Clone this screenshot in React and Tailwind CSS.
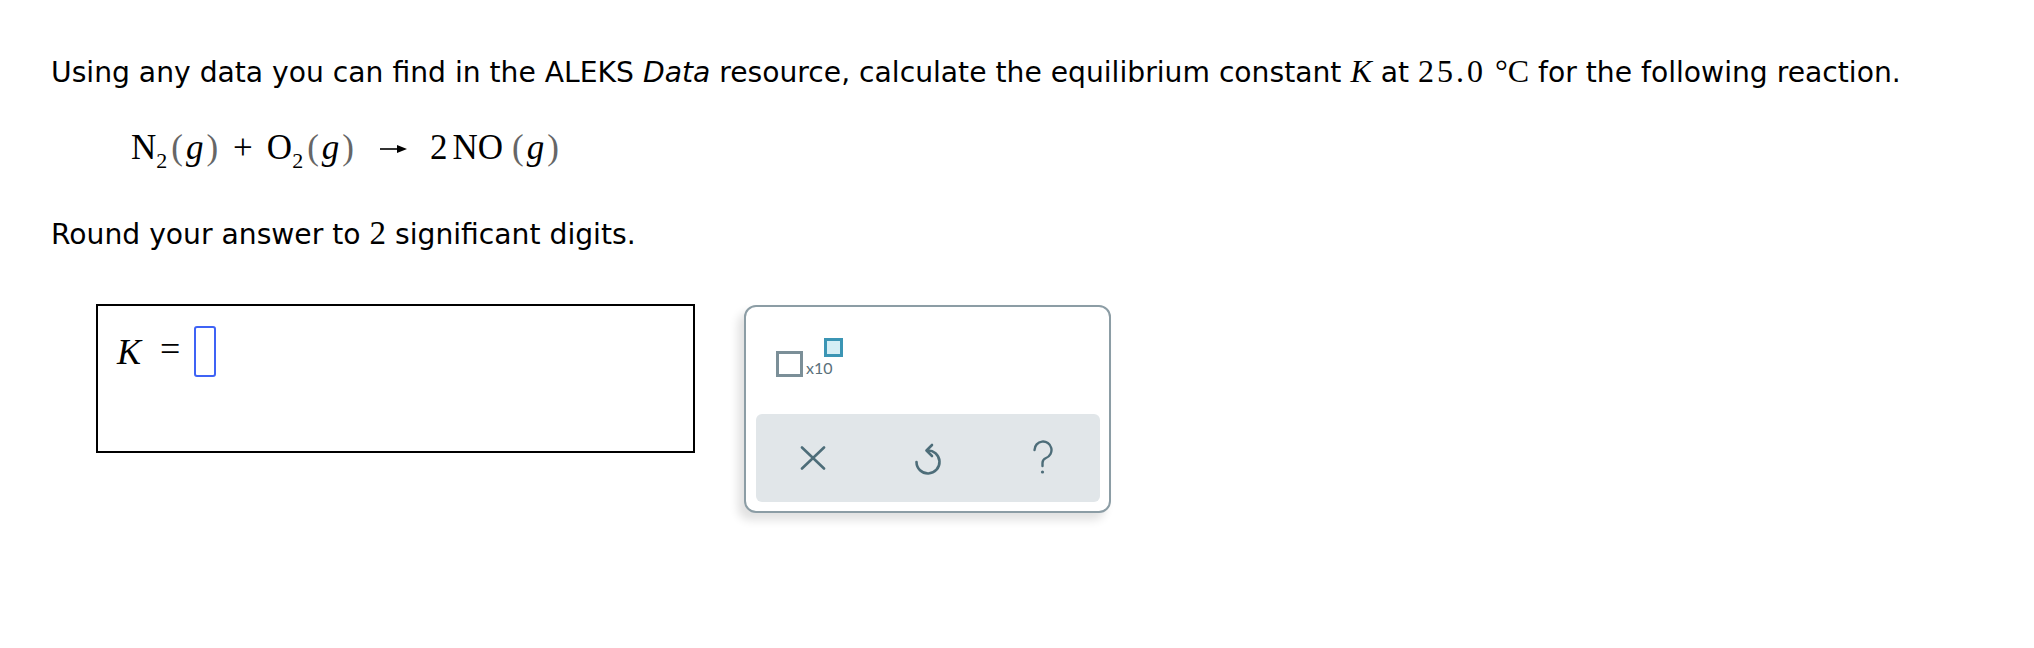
import React from 'react';

const serif = "font-['Liberation_Serif','Times_New_Roman',serif]";

// Arrow used in the reaction
const ReactionArrow = () => (
  <svg width="27" height="10" viewBox="0 0 27 10" className="ml-[26px] inline-block align-[5px]">
    <line x1="0" y1="5" x2="19" y2="5" stroke="#000" strokeWidth="1.6" />
    <path d="M17 1 L27 5 L17 9 Z" fill="#000" />
  </svg>
);

const IconClear = () => (
  <svg width="26" height="24" viewBox="0 0 26 24" fill="none" stroke="#4d6d79" strokeWidth="2.6" strokeLinecap="round">
    <line x1="2" y1="1.5" x2="24" y2="22.5" />
    <line x1="24" y1="1.5" x2="2" y2="22.5" />
  </svg>
);

const IconUndo = () => (
  <svg width="28" height="34" viewBox="0 0 28 34" fill="none" stroke="#4d6d79" strokeWidth="2.6" strokeLinecap="round" strokeLinejoin="round">
    <path d="M13 9.5 A11.5 11.5 0 1 1 2.5 21" />
    <path d="M18 4 L12.5 9.5 L18 15" />
  </svg>
);

const IconHelp = () => (
  <svg width="24" height="36" viewBox="0 0 24 36" fill="none" stroke="#4d6d79" strokeWidth="2.4" strokeLinecap="round">
    <path d="M3.5 10 A8.5 8.5 0 1 1 15 18 C12.5 19 11.5 20.5 11.5 23 V26" />
    <circle cx="11.5" cy="32" r="1.6" fill="#4d6d79" stroke="none" />
  </svg>
);

export default function App() {
  return (
    <div className="min-h-screen bg-white pl-[51px] pt-[57px] font-['DejaVu_Sans',Verdana,sans-serif] text-[28.2px] text-black">
      {/* Question text */}
      <p className="h-[32px] leading-[32px] whitespace-nowrap">
        Using any data you can find in the ALEKS <span className="italic">Data</span> resource, calculate the equilibrium constant{' '}
        <span className={`${serif} italic text-[32px] leading-[0]`}>K</span> at{' '}
        <span className={`${serif} text-[32px] leading-[0] tracking-[3px]`}>25.0</span>{' '}
        <span className={`${serif} text-[32px] leading-[0]`}>°C</span> for the following reaction.
      </p>

      {/* Reaction */}
      <div className={`${serif} ml-[80px] mt-[39px] h-[40px] leading-[40px] text-[35px] whitespace-nowrap`}>
        <span>N</span>
        <sub className="text-[22px] bottom-[-9px]">2</sub>
        <span className="ml-[4px] text-[#666]">(</span>
        <span className="mx-[3px] italic">g</span>
        <span className="text-[#666]">)</span>
        <span className="ml-[15px]">+</span>
        <span className="ml-[14px]">O</span>
        <sub className="text-[22px] bottom-[-9px]">2</sub>
        <span className="ml-[4px] text-[#666]">(</span>
        <span className="mx-[3px] italic">g</span>
        <span className="text-[#666]">)</span>
        <ReactionArrow />
        <span className="ml-[23px]">2</span>
        <span className="ml-[5px]">NO</span>
        <span className="ml-[9px] text-[#666]">(</span>
        <span className="mx-[3px] italic">g</span>
        <span className="text-[#666]">)</span>
      </div>

      <p className="mt-[51px] h-[32px] leading-[32px] whitespace-nowrap">
        Round your answer to <span className={`${serif} text-[33px] leading-[0]`}>2</span> significant digits.
      </p>

      {/* Answer area */}
      <div className="mt-[53px] flex items-start">
        <div className="ml-[45px] w-[599px] h-[149px] border-2 border-black pl-[19px] pt-[20px]">
          <div className="flex items-center">
            <span className={`${serif} italic text-[36px] leading-none`}>K</span>
            <span className={`${serif} ml-[19px] mb-[6px] text-[36px] leading-none`}>=</span>
            <div className="ml-[14px] w-[22px] h-[51px] border-2 border-[#3f63f5] rounded-[3px]" />
          </div>
        </div>

        {/* Keypad */}
        <div className="ml-[49px] mt-[1px] w-[367px] h-[208px] rounded-[12px] border-2 border-[#8c9da5] bg-white shadow-[-6px_7px_10px_rgba(0,0,0,0.12)]">
          <div className="relative ml-[30px] mt-[44px] flex items-end">
            <div className="w-[27px] h-[26px] border-[3px] border-[#7b8f98]" />
            <span className="ml-[3px] mb-[1px] font-['Lato',sans-serif] text-[16px] leading-none text-[#5a707a]">x10</span>
            <div className="absolute left-[48px] top-[-13px] w-[19px] h-[19px] border-[3px] border-[#3b95b4] bg-[#d5eef5]" />
          </div>
          <div className="ml-[10px] mr-[9px] mt-[37px] h-[88px] rounded-[6px] bg-[#e1e6e9] grid grid-cols-3 items-center justify-items-center">
            <IconClear />
            <IconUndo />
            <IconHelp />
          </div>
        </div>
      </div>
    </div>
  );
}
